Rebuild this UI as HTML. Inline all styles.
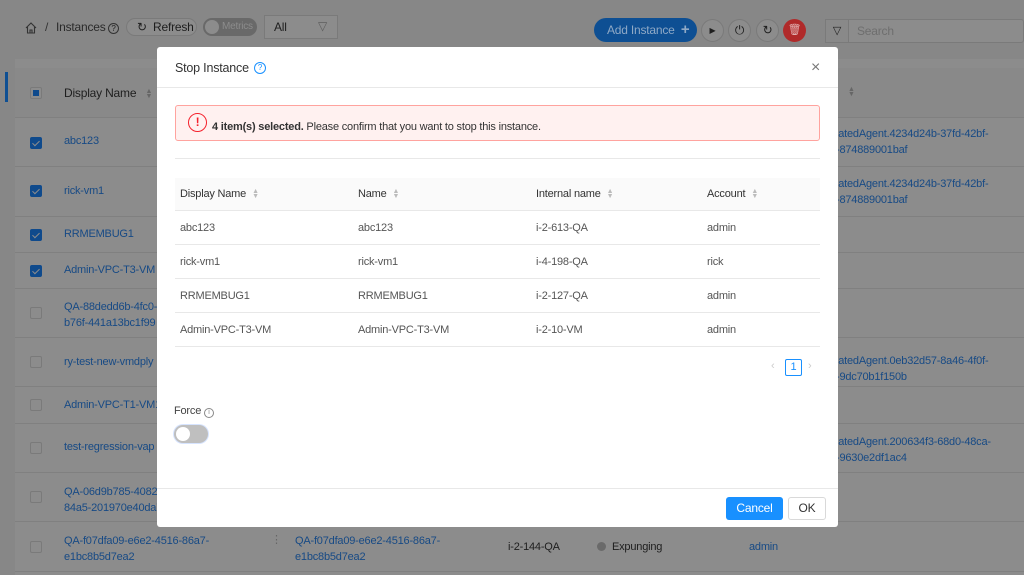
<!DOCTYPE html>
<html><head><meta charset="utf-8"><style>
*{box-sizing:border-box;margin:0;padding:0}
body{width:1024px;height:575px;overflow:hidden;background:#878787;font-family:"Liberation Sans",sans-serif;font-size:11px;color:#1e1e1e;position:relative;letter-spacing:-0.2px}
.a{position:absolute;white-space:nowrap}
.link{color:#174a85}
.cb{position:absolute;left:30px;width:12px;height:12px;border:1px solid #7a7a7a;border-radius:2px;background:#8c8c8c}
.cb.on{background:#0f4a8c;border-color:#0f4a8c}
.cb.on:after{content:"";position:absolute;left:3px;top:1px;width:3px;height:6px;border:solid #8c8c8c;border-width:0 1.5px 1.5px 0;transform:rotate(45deg)}
.rowline{position:absolute;left:15px;right:0;height:1px;background:#808080}
.modal{position:absolute;left:157px;top:47px;width:681px;height:480px;background:#fff;border-radius:3px;color:#333}
.th{position:absolute;top:131px;height:33px;left:18px;width:645px;background:#fafafa;border-bottom:1px solid #e8e8e8}
.sort{display:inline-block;margin-left:6px;color:#bbb;font-size:7px;line-height:5px;vertical-align:middle}
.tl{position:absolute;left:18px;width:645px;height:1px;background:#e8e8e8}
</style></head><body>
<svg class="a" style="left:24px;top:21px" width="14" height="14" viewBox="0 0 14 14"><path d="M2 7 L7 2 L12 7 M3.5 6 V12 H10.5 V6 M6 12 V9 H8 V12" fill="none" stroke="#333" stroke-width="1.1"/></svg>
<div class="a" style="left:45px;top:20px;color:#333;font-size:12px">/</div>
<div class="a" style="left:56px;top:20px;font-size:12px;color:#2a2a2a">Instances</div>
<div class="a" style="left:108px;top:23px;width:11px;height:11px;border:1px solid #333;border-radius:50%;font-size:8px;text-align:center;line-height:9px">?</div>
<div class="a" style="left:126px;top:18px;width:71px;height:18px;border:1px solid #7a7a7a;border-radius:9px;background:#8c8c8c;font-size:12px;padding-left:26px;line-height:16px">Refresh</div>
<div class="a" style="left:137px;top:20px;font-size:12px">↻</div>
<div class="a" style="left:203px;top:18px;width:54px;height:18px;border-radius:9px;background:#696969;color:#8c8c8c;font-size:10px;line-height:18px;padding-left:19px">Metrics</div>
<div class="a" style="left:205px;top:20px;width:14px;height:14px;border-radius:50%;background:#8c8c8c"></div>
<div class="a" style="left:264px;top:15px;width:74px;height:24px;border:1px solid #7a7a7a;background:#8c8c8c;font-size:12px;padding:4px 9px">All<span style="position:absolute;right:10px;top:3px;color:#5e5e5e">▽</span></div>
<div class="a" style="left:594px;top:18px;width:103px;height:24px;border-radius:12px;background:#0e4f93;color:#8fa9c6;font-size:12px;line-height:24px;padding-left:13px">Add Instance&nbsp; <b style="font-size:15px">+</b></div>
<div class="a" style="left:701px;top:19px;width:23px;height:23px;border:1px solid #7a7a7a;border-radius:50%;background:#8c8c8c;font-size:8px;text-align:center;line-height:21px">▶</div>
<div class="a" style="left:728px;top:19px;width:23px;height:23px;border:1px solid #7a7a7a;border-radius:50%;background:#8c8c8c;font-size:12px;text-align:center;line-height:21px">⏻</div>
<div class="a" style="left:756px;top:19px;width:23px;height:23px;border:1px solid #7a7a7a;border-radius:50%;background:#8c8c8c;font-size:12px;text-align:center;line-height:21px">↻</div>
<div class="a" style="left:783px;top:19px;width:23px;height:23px;border-radius:50%;background:#b02a2a;color:#e0b0b0;font-size:11px;text-align:center;line-height:23px">🗑</div>
<div class="a" style="left:825px;top:19px;width:199px;height:24px;border:1px solid #7a7a7a;background:#8c8c8c;border-radius:3px"></div>
<div class="a" style="left:825px;top:19px;width:24px;height:24px;border:1px solid #7a7a7a;background:#898989;text-align:center;line-height:22px;font-size:11px">▽</div>
<div class="a" style="left:857px;top:24px;color:#6e6e6e;font-size:12px">Search</div>
<div class="a" style="left:5px;top:72px;width:3px;height:30px;background:#0e4f93"></div>
<div class="a" style="left:15px;top:59px;right:0;bottom:0;background:#8c8c8c"></div>
<div class="a" style="left:15px;top:68px;right:0;height:50px;background:#898989;border-bottom:1px solid #808080"></div>
<div class="cb" style="top:87px"><i style="position:absolute;left:2px;top:2px;width:6px;height:6px;background:#0f4a8c"></i></div>
<div class="a" style="left:64px;top:86px;font-size:12px">Display Name <span class="sort" style="color:#666">▲<br>▼</span></div>
<div class="a" style="left:842px;top:86px"><span class="sort" style="color:#666">▲<br>▼</span></div>
<div class="rowline" style="top:166px"></div><div class="rowline" style="top:216px"></div><div class="rowline" style="top:252px"></div><div class="rowline" style="top:288px"></div><div class="rowline" style="top:337px"></div><div class="rowline" style="top:386px"></div><div class="rowline" style="top:423px"></div><div class="rowline" style="top:472px"></div><div class="rowline" style="top:521px"></div><div class="rowline" style="top:571px"></div>
<div class="cb on" style="top:137px"></div><div class="a link" style="left:64px;top:135px">abc123</div>
<div class="cb on" style="top:185px"></div><div class="a link" style="left:64px;top:185px">rick-vm1</div>
<div class="cb on" style="top:229px"></div><div class="a link" style="left:64px;top:228px">RRMEMBUG1</div>
<div class="cb on" style="top:265px"></div><div class="a link" style="left:64px;top:264px">Admin-VPC-T3-VM</div>
<div class="cb" style="top:307px"></div><div class="a link" style="left:64px;top:299px;line-height:16px">QA-88dedd6b-4fc0-<br>b76f-441a13bc1f99</div>
<div class="cb" style="top:356px"></div><div class="a link" style="left:64px;top:356px">ry-test-new-vmdply</div>
<div class="cb" style="top:399px"></div><div class="a link" style="left:64px;top:399px">Admin-VPC-T1-VM1</div>
<div class="cb" style="top:442px"></div><div class="a link" style="left:64px;top:441px">test-regression-vap</div>
<div class="cb" style="top:491px"></div><div class="a link" style="left:64px;top:484px;line-height:16px">QA-06d9b785-4082-<br>84a5-201970e40da7</div>
<div class="cb" style="top:541px"></div><div class="a link" style="left:64px;top:533px;line-height:16px">QA-f07dfa09-e6e2-4516-86a7-<br>e1bc8b5d7ea2</div>
<div class="a" style="left:271px;top:533px;color:#666">⋮</div>
<div class="a link" style="left:295px;top:533px;line-height:16px">QA-f07dfa09-e6e2-4516-86a7-<br>e1bc8b5d7ea2</div>
<div class="a" style="left:508px;top:541px">i-2-144-QA</div>
<div class="a" style="left:597px;top:542px;width:9px;height:9px;border-radius:50%;background:#6a6a6a"></div>
<div class="a" style="left:612px;top:541px">Expunging</div>
<div class="a link" style="left:749px;top:541px">admin</div>
<div class="a link" style="left:836px;top:126px;line-height:16px">latedAgent.4234d24b-37fd-42bf-<br>-874889001baf</div>
<div class="a link" style="left:836px;top:176px;line-height:16px">latedAgent.4234d24b-37fd-42bf-<br>-874889001baf</div>
<div class="a link" style="left:836px;top:353px;line-height:16px">latedAgent.0eb32d57-8a46-4f0f-<br>-9dc70b1f150b</div>
<div class="a link" style="left:836px;top:434px;line-height:16px">latedAgent.200634f3-68d0-48ca-<br>-9630e2df1ac4</div>
<div class="modal">
<div class="a" style="left:18px;top:14px;font-size:12.5px;color:#333">Stop Instance</div>
<div class="a" style="left:97px;top:15px;width:12px;height:12px;border:1px solid #1890ff;border-radius:50%;color:#1890ff;font-size:8px;text-align:center;line-height:10px">?</div>
<div class="a" style="left:654px;top:12px;font-size:16px;color:#777">×</div>
<div class="a" style="left:0;top:40px;width:681px;height:1px;background:#e8e8e8"></div>
<div class="a" style="left:18px;top:58px;width:645px;height:36px;background:#fff1f0;border:1px solid #ffa39e;border-radius:3px"></div>
<div class="a" style="left:31px;top:66px;width:19px;height:19px;border:1.5px solid #f5222d;border-radius:50%;color:#f5222d;font-size:12px;text-align:center;line-height:16px;font-weight:bold">!</div>
<div class="a" style="left:55px;top:74px;font-size:11px"><b>4 item(s) selected.</b> Please confirm that you want to stop this instance.</div>
<div class="tl" style="top:111px"></div>
<div class="th"></div>
<div class="a" style="left:23px;top:141px">Display Name<span class="sort">▲<br>▼</span></div>
<div class="a" style="left:201px;top:141px">Name<span class="sort">▲<br>▼</span></div>
<div class="a" style="left:379px;top:141px">Internal name<span class="sort">▲<br>▼</span></div>
<div class="a" style="left:550px;top:141px">Account<span class="sort">▲<br>▼</span></div>
<div class="a" style="left:23px;top:175px;color:#555">abc123</div><div class="a" style="left:201px;top:175px;color:#555">abc123</div><div class="a" style="left:379px;top:175px;color:#555">i-2-613-QA</div><div class="a" style="left:550px;top:175px;color:#555">admin</div>
<div class="tl" style="top:197px"></div>
<div class="a" style="left:23px;top:209px;color:#555">rick-vm1</div><div class="a" style="left:201px;top:209px;color:#555">rick-vm1</div><div class="a" style="left:379px;top:209px;color:#555">i-4-198-QA</div><div class="a" style="left:550px;top:209px;color:#555">rick</div>
<div class="tl" style="top:231px"></div>
<div class="a" style="left:23px;top:243px;color:#555">RRMEMBUG1</div><div class="a" style="left:201px;top:243px;color:#555">RRMEMBUG1</div><div class="a" style="left:379px;top:243px;color:#555">i-2-127-QA</div><div class="a" style="left:550px;top:243px;color:#555">admin</div>
<div class="tl" style="top:265px"></div>
<div class="a" style="left:23px;top:277px;color:#555">Admin-VPC-T3-VM</div><div class="a" style="left:201px;top:277px;color:#555">Admin-VPC-T3-VM</div><div class="a" style="left:379px;top:277px;color:#555">i-2-10-VM</div><div class="a" style="left:550px;top:277px;color:#555">admin</div>
<div class="tl" style="top:299px"></div>
<div class="a" style="left:614px;top:313px;color:#ccc">‹</div>
<div class="a" style="left:628px;top:312px;width:17px;height:17px;border:1px solid #1890ff;border-radius:2px;color:#1890ff;text-align:center;line-height:15px">1</div>
<div class="a" style="left:651px;top:313px;color:#ccc">›</div>
<div class="a" style="left:17px;top:358px;color:#444">Force <span style="display:inline-block;width:10px;height:10px;border:1px solid #888;border-radius:50%;font-size:7px;text-align:center;line-height:8px;color:#888">i</span></div>
<div class="a" style="left:17px;top:378px;width:34px;height:18px;border-radius:9px;background:#bfbfbf;box-shadow:0 0 0 1px #d6e4ff"></div>
<div class="a" style="left:19px;top:380px;width:14px;height:14px;border-radius:50%;background:#fff"></div>
<div class="a" style="left:0;top:441px;width:681px;height:1px;background:#e8e8e8"></div>
<div class="a" style="left:569px;top:450px;width:57px;height:23px;background:#1890ff;border-radius:3px;color:#fff;font-size:12px;text-align:center;line-height:23px">Cancel</div>
<div class="a" style="left:631px;top:450px;width:38px;height:23px;border:1px solid #d9d9d9;border-radius:3px;font-size:12px;text-align:center;line-height:21px">OK</div>
</div>
</body></html>
